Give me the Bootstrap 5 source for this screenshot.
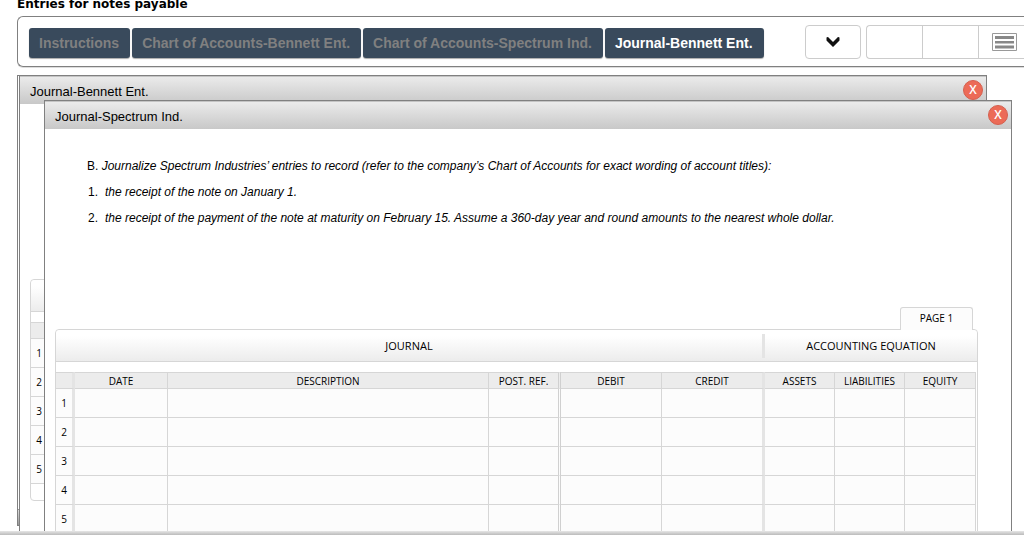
<!DOCTYPE html>
<html lang="en">
<head>
<meta charset="utf-8">
<meta name="viewport" content="width=device-width, initial-scale=1">
<title>Entries for notes payable</title>
<link href="https://cdn.jsdelivr.net/npm/bootstrap@5.3.0/dist/css/bootstrap.min.css" rel="stylesheet">
<style>
  body { font-family: "Liberation Sans", Arial, sans-serif; color: #000; background: #fff; }
  .page-title { font: bold 12px/16px "DejaVu Sans", Verdana, sans-serif; margin: -4px 0 4px 17px; }
  .toolbar { margin-left: 17px; height: 51px; padding-left: 11px; border: 1px solid #808080; border-right: 0; border-radius: 6px 0 0 6px; box-shadow: 0 1px 0 #ddd; gap: 2px; }
  .tab-btn { height: 30px; margin-top: 2px; padding: 0 11px 0 10px; border: 0; border-radius: 3px; background: #394a5c; color: #808080; font-weight: bold; font-size: 14px; line-height: 30px; white-space: nowrap; box-shadow: 0 1px 1px #aaa; }
  .tab-btn.current { color: #fff; }
  .tool-btn { width: 56px; height: 34px; padding: 0; border: 1px solid #ccc; border-radius: 4px; background: #fff; }
  .tool-group { margin: 0 -6px 0 3px; }
  .tool-group .tool-btn { border-radius: 0; border-right: 0; flex: none; }
  .tool-group .tool-btn:first-child { border-radius: 4px 0 0 4px; }
  .tool-group .tool-btn:last-child { width: 52px; }
  .desk { margin-top: 8px; min-height: 0; }
  .pane { position: absolute; background: #fff; border: 1px solid #808080; border-bottom: 0; }
  .pane-under { left: 17px; right: 39px; top: 0; bottom: 5px; border-bottom: 1px solid #808080; }
  .pane-under .foot { height: 16px; border-top: 1px solid #999; background: linear-gradient(#ddd, #999); }
  .pane-back { left: 19px; right: 37px; top: 0; bottom: 0; }
  .pane-front { left: 44px; right: 12px; top: 25px; bottom: 0; }
  .pane-head { height: 28px; padding: 0 3px 0 10px; background: linear-gradient(#ececec, #c8c8c8); box-shadow: inset 0 1px 0 #c4c4c4; }
  .pane-title { font-size: 13px; line-height: 16px; }
  .close-btn { width: 20px; height: 20px; padding: 0; border: 1px solid #d4604f; border-radius: 50%; background: #ec6b57; color: #fff; font: 600 12px/18px "Open Sans", sans-serif; }
  .task { font-size: 12px; line-height: 18px; padding: 28px 0 0 42px; height: 178px; }
  .task p { margin: 0 0 8px; white-space: nowrap; }
  .task p b { display: inline-block; width: 18px; font-weight: normal; padding-left: 1px; }
  .journal { margin: 0 33px 0 10px; border: 1px solid #d6d6d6; border-radius: 4px; font-family: "Open Sans", sans-serif; font-weight: 500; }
  .page-tab { width: 73px; height: 23px; margin: 0 38px -1px auto; border: 1px solid #d6d6d6; border-bottom: 0; border-radius: 3px 3px 0 0; background: #fcfcfc; font: 500 10px/20px "Open Sans", sans-serif; }
  .band { height: 32px; border-bottom: 1px solid #d6d6d6; border-radius: 4px 4px 0 0; background: linear-gradient(#fff 20%, #ececec); font-size: 11px; margin-bottom: 10px; }
  .band .label { padding-top: 2px; }
  .band .rule { width: 3px; height: 24px; background: #e4e4e4; }
  .band .side { width: 212px; }
  .ledger { width: calc(100% - 1px); table-layout: fixed; border-collapse: separate; border-spacing: 0; font-size: 10px; line-height: 12px; text-align: center; }
  .ledger th { height: 17px; padding: 0; background: #ececec; border: 0 solid #d6d6d6; border-width: 1px 1px 1px 0; font-weight: 500; }
  .ledger td, .ledger tbody th { height: 29px; padding: 0; background: #fcfcfc; border: 0 solid #d6d6d6; border-width: 0 1px 1px 0; }
  .ledger tr > :nth-child(1) { border-right: 3px solid #e4e4e4; }
  .ledger tr > :nth-child(4) { border-right: 3px double #d0d0d0; }
  .ledger tr > :nth-child(6) { border-right: 3px solid #e4e4e4; }
  .w-num { width: 19px } .w-date { width: 93px } .w-ref { width: 72px } .w-debit { width: 101px }
  .w-credit { width: 103px } .w-eq { width: 70px } .w-last { width: 71px }
  .pane-back .journal { margin-top: 175px; padding-bottom: 16px; }
  .shelf { height: 4px; margin-bottom: 6px; background: linear-gradient(#e6e6e6, #bbb); flex: none; }
</style>
</head>
<body class="vh-100 d-flex flex-column overflow-hidden">
  <h1 class="page-title flex-shrink-0">Entries for notes payable</h1>

  <nav class="toolbar d-flex align-items-center flex-shrink-0 overflow-hidden" aria-label="Worksheets">
    <button class="tab-btn" type="button">Instructions</button>
    <button class="tab-btn" type="button">Chart of Accounts-Bennett Ent.</button>
    <button class="tab-btn" type="button">Chart of Accounts-Spectrum Ind.</button>
    <button class="tab-btn current" type="button">Journal-Bennett Ent.</button>
    <button class="tool-btn ms-auto flex-shrink-0" type="button" aria-label="More">
      <svg width="14" height="12" viewBox="0 0 14 12"><path d="M.5 1.5Q2 .5 3 2L7 6 11 2Q12 .5 13.500 1.500V4.500L7 11 .5 4.500Z" fill="#111"/></svg>
    </button>
    <div class="tool-group d-flex flex-shrink-0">
      <button class="tool-btn" type="button" aria-label="Previous"></button>
      <button class="tool-btn" type="button" aria-label="Next"></button>
      <button class="tool-btn" type="button" aria-label="List">
        <svg width="25" height="18" viewBox="0 0 25 18"><path d="M.5.5h24v17H.5z" fill="#fff" stroke="#999"/><path d="M3 3h19v3H3zM3 8h19v2.500H3zM3 12.500h19v3H3z" fill="#888"/></svg>
      </button>
    </div>
  </nav>

  <main class="desk flex-fill position-relative overflow-hidden">
    <div class="pane pane-under d-flex flex-column justify-content-end"><div class="foot"></div></div>

    <section class="pane pane-back">
      <header class="pane-head d-flex align-items-center justify-content-between">
        <span class="pane-title pt-1">Journal-Bennett Ent.</span>
        <button class="close-btn" type="button">X</button>
      </header>
      <div class="journal">
        <div class="band"></div>
        <table class="ledger">
          <colgroup><col class="w-num"><col></colgroup>
          <thead><tr><th></th><th></th></tr></thead>
          <tbody>
            <tr><th>1</th><td></td></tr>
            <tr><th>2</th><td></td></tr>
            <tr><th>3</th><td></td></tr>
            <tr><th>4</th><td></td></tr>
            <tr><th>5</th><td></td></tr>
          </tbody>
        </table>
      </div>
    </section>

    <section class="pane pane-front">
      <header class="pane-head d-flex align-items-center justify-content-between">
        <span class="pane-title pt-1">Journal-Spectrum Ind.</span>
        <button class="close-btn" type="button">X</button>
      </header>
      <div class="task">
        <p>B. <i>Journalize Spectrum Industries’ entries to record (refer to the company’s Chart of Accounts for exact wording of account titles):</i></p>
        <p><b>1.</b><i>the receipt of the note on January 1.</i></p>
        <p><b>2.</b><i>the receipt of the payment of the note at maturity on February 15. Assume a 360-day year and round amounts to the nearest whole dollar.</i></p>
      </div>
      <div class="page-tab position-relative text-center">PAGE 1</div>
      <div class="journal">
        <div class="band d-flex align-items-center text-center">
          <div class="label flex-fill">JOURNAL</div>
          <div class="rule"></div>
          <div class="label side">ACCOUNTING EQUATION</div>
        </div>
        <table class="ledger">
          <colgroup><col class="w-num"><col class="w-date"><col><col class="w-ref"><col class="w-debit"><col class="w-credit"><col class="w-eq"><col class="w-eq"><col class="w-last"></colgroup>
          <thead>
            <tr><th></th><th>DATE</th><th>DESCRIPTION</th><th>POST. REF.</th><th>DEBIT</th><th>CREDIT</th><th>ASSETS</th><th>LIABILITIES</th><th>EQUITY</th></tr>
          </thead>
          <tbody>
            <tr><th>1</th><td></td><td></td><td></td><td></td><td></td><td></td><td></td><td></td></tr>
            <tr><th>2</th><td></td><td></td><td></td><td></td><td></td><td></td><td></td><td></td></tr>
            <tr><th>3</th><td></td><td></td><td></td><td></td><td></td><td></td><td></td><td></td></tr>
            <tr><th>4</th><td></td><td></td><td></td><td></td><td></td><td></td><td></td><td></td></tr>
            <tr><th>5</th><td></td><td></td><td></td><td></td><td></td><td></td><td></td><td></td></tr>
          </tbody>
        </table>
      </div>
    </section>
  </main>
  <div class="shelf"></div>
<script src="https://cdn.jsdelivr.net/npm/bootstrap@5.3.0/dist/js/bootstrap.bundle.min.js"></script>
</body>
</html>
